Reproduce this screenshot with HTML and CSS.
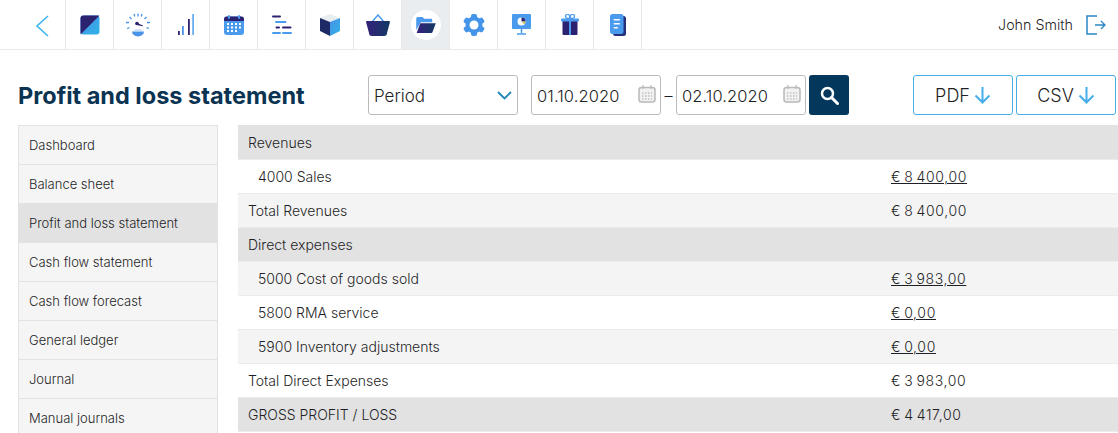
FILE: index.html
```html
<!DOCTYPE html>
<html lang="en">
<head>
  <meta charset="UTF-8">
  <title>Profit and loss statement</title>
  <link rel="stylesheet" href="styles.css">
</head>
<body>
  <svg class="defs" width="0" height="0">
    <defs>
      <linearGradient id="gBlue" x1="0" y1="0" x2="1" y2="1"><stop offset="0" stop-color="#4a8fe8"/><stop offset="1" stop-color="#2fb4e6"/></linearGradient>
      <linearGradient id="gDark" x1="0" y1="0" x2="1" y2="0"><stop offset="0" stop-color="#35207a"/><stop offset="1" stop-color="#123a63"/></linearGradient>
    </defs>
  </svg>

  <header class="topbar">
    <a class="back">
      <svg width="14" height="22" viewBox="0 0 14 22"><path d="M13 1 2 11l11 10" fill="none" stroke="#3db4f0" stroke-width="1.6"/></svg>
    </a>
    <nav class="modules">
      <a class="module">
        <svg width="20" height="20" viewBox="0 0 20 20"><rect width="19" height="19" x=".5" y=".5" rx="3" fill="url(#gBlue)"/><path d="M.5 19.5v-16a3 3 0 0 1 3-3h16z" fill="#2b2370"/></svg>
      </a>
      <a class="module">
        <svg width="26" height="24" viewBox="0 0 26 24"><path d="M1 9.500h3M2 15.500l2.500-.8M22 9.500h3M24 15.500l-2.500-.8M4.500 4l2 2M21.500 4l-2 2M9 1l.8 2.500M17 1l-.8 2.500M13 .5v3" fill="none" stroke="#4a93e8" stroke-width="1.300"/><path d="M11 9.500l7 3-.3.8-7-1.500z" fill="#2b2370"/><circle cx="12" cy="10.500" r="1.800" fill="#2b2370"/><path d="M7 18.500h12a6 5 0 0 1-12 0z" fill="#4a93e8"/><path d="M8.500 18a4.500 2 0 0 1 9 0z" fill="#cfe2fa"/></svg>
      </a>
      <a class="module">
        <svg width="16" height="21" viewBox="0 0 16 21"><rect x="0" y="17" width="1.800" height="4" fill="#2b2370"/><rect x="4" y="12" width="1.800" height="9" fill="#4a93e8"/><rect x="10" y="5" width="1.800" height="16" fill="#2b2370"/><rect x="14.200" y="0" width="1.800" height="21" fill="#6aaef0"/></svg>
      </a>
      <a class="module">
        <svg width="20" height="20" viewBox="0 0 20 20"><rect y="1.500" width="20" height="18.500" rx="3" fill="#4a9bee"/><path d="M0 6V4.500a3 3 0 0 1 3-3h14a3 3 0 0 1 3 3V6z" fill="#2b2370"/><rect x="4" y="0" width="2" height="4" rx="1" fill="#4a9bee"/><rect x="14" y="0" width="2" height="4" rx="1" fill="#4a9bee"/><g fill="#fff"><rect x="3" y="8" width="2" height="2"/><rect x="7" y="8" width="2" height="2"/><rect x="11" y="8" width="2" height="2"/><rect x="15" y="8" width="2" height="2"/><rect x="3" y="11.500" width="2" height="2"/><rect x="7" y="11.500" width="2" height="2"/><rect x="11" y="11.500" width="2" height="2"/><rect x="15" y="11.500" width="2" height="2"/><rect x="7" y="15" width="2" height="2"/><rect x="11" y="15" width="2" height="2"/><rect x="3" y="15" width="2" height="2"/></g></svg>
      </a>
      <a class="module">
        <svg width="20" height="20" viewBox="0 0 20 20"><g fill="none" stroke-width="2" stroke-linecap="round"><path d="M1 1.500h7" stroke="#2b2370"/><path d="M4 7h9.500" stroke="#4a9bee"/><path d="M4.500 12.500h2.500M11 12.500h7.500" stroke="#2b2370"/><path d="M1 18h7M11 18h8" stroke="#4a9bee"/></g></svg>
      </a>
      <a class="module">
        <svg width="20" height="22" viewBox="0 0 20 22"><path d="M10 0 20 4 10 8 0 4z" fill="#e8edf0"/><path d="M0 4l10 4v14L0 17z" fill="#1e2a66"/><path d="M20 4 10 8v14l10-5z" fill="url(#gBlue)"/></svg>
      </a>
      <a class="module">
        <svg width="24" height="22" viewBox="0 0 24 22"><path d="M6 8l6-7 6 7" fill="none" stroke="#4a9bee" stroke-width="1.500"/><path d="M1 7h22a1 1 0 0 1 1 1l-3 11a3 3 0 0 1-3 3H6a3 3 0 0 1-3-3L0 8a1 1 0 0 1 1-1z" fill="url(#gDark)"/></svg>
      </a>
      <a class="module active">
        <span class="circle">
          <svg width="22" height="16" viewBox="0 0 22 18"><path d="M0 2a2 2 0 0 1 2-2h5l2 2h8a1 1 0 0 1 1 1v3H5L0 15z" fill="#4a9bee"/><path d="M4.500 7H22l-3.500 9.500a2 2 0 0 1-2 1.500H.5z" fill="url(#gDark)"/></svg>
        </span>
      </a>
      <a class="module">
        <svg width="22" height="22" viewBox="0 0 22 22"><g fill="#4494ea"><rect x="8" y="0" width="6" height="22" rx="2"/><rect x="8" y="0" width="6" height="22" rx="2" transform="rotate(60 11 11)"/><rect x="8" y="0" width="6" height="22" rx="2" transform="rotate(120 11 11)"/><circle cx="11" cy="11" r="8.500"/></g><circle cx="11" cy="11" r="4.500" fill="#fff"/></svg>
      </a>
      <a class="module">
        <svg width="19" height="21" viewBox="0 0 19 21"><rect width="19" height="15" rx="1" fill="#4a9bee"/><path d="M9.500 15v4" stroke="#4a9bee" stroke-width="1.500"/><path d="M5 20h9" stroke="#4a9bee" stroke-width="1.500"/><circle cx="9.500" cy="7.500" r="4" fill="#fff"/><path d="M9.500 7.500V3.500a4 4 0 0 1 4 4z" fill="#2b2370"/><path d="M9.500 7.500h4a4 4 0 0 1-1.200 2.800z" fill="#c9b94a"/></svg>
      </a>
      <a class="module">
        <svg width="18" height="21" viewBox="0 0 18 21"><path d="M5 3.500a2 2 0 1 1 3.500-1.300L9 4.500 6.500 4.500zM13 3.500a2 2 0 1 0-3.500-1.300L9 4.500h2.500z" fill="none" stroke="#4a9bee" stroke-width="1.300"/><rect x="1.500" y="6" width="15" height="15" rx="1" fill="#2b2370"/><rect x="0" y="4.500" width="18" height="3" rx="1" fill="#4a9bee"/><rect x="8" y="4.500" width="2" height="16.500" fill="#4a9bee"/></svg>
      </a>
      <a class="module">
        <svg width="16" height="22" viewBox="0 0 16 22"><rect x="3" y="2" width="13" height="20" rx="2.500" fill="#24307a"/><rect width="13.500" height="20" rx="2.500" fill="#4a9bee"/><g fill="#fff"><rect x="3.500" y="5" width="6.500" height="1.500" rx=".7"/><rect x="3.500" y="9" width="6.500" height="1.500" rx=".7"/><rect x="3.500" y="13" width="4.500" height="1.500" rx=".7"/></g></svg>
      </a>
    </nav>
    <div class="user">
      <span class="user-name">John Smith</span>
      <svg width="21" height="20" viewBox="0 0 21 20"><path d="M11 1H1v18h10" fill="none" stroke="#2a86c4" stroke-width="1.500"/><path d="M9 10h10M15 6l4 4-4 4" fill="none" stroke="#2a86c4" stroke-width="1.300"/></svg>
    </div>
  </header>

  <section class="toolbar">
    <h1 class="page-title">Profit and loss statement</h1>
    <div class="filters">
      <div class="field select-field">
        <span>Period</span>
        <svg width="15" height="9" viewBox="0 0 15 9"><path d="M1 1l6.500 6.500L14 1" fill="none" stroke="#1f86b8" stroke-width="1.800"/></svg>
      </div>
      <div class="dates">
        <div class="field date-field">
          <span>01.10.2020</span>
          <svg class="cal" width="18" height="18" viewBox="0 0 18 18"><rect x="1" y="2.500" width="16" height="14.500" rx="2.500" fill="#f1f1f1" stroke="#b9b9b9" stroke-width="1.500"/><path d="M5 0v4M13 0v4" stroke="#b9b9b9" stroke-width="1.200"/><path d="M4 8h10M4 11h10M4 14h10" stroke="#aaa" stroke-width="1.200" stroke-dasharray="1.500 1.500"/></svg>
        </div>
        <span class="dash">–</span>
        <div class="field date-field">
          <span>02.10.2020</span>
          <svg class="cal" width="18" height="18" viewBox="0 0 18 18"><rect x="1" y="2.500" width="16" height="14.500" rx="2.500" fill="#f1f1f1" stroke="#b9b9b9" stroke-width="1.500"/><path d="M5 0v4M13 0v4" stroke="#b9b9b9" stroke-width="1.200"/><path d="M4 8h10M4 11h10M4 14h10" stroke="#aaa" stroke-width="1.200" stroke-dasharray="1.500 1.500"/></svg>
        </div>
        <button class="search-btn">
          <svg width="19" height="19" viewBox="0 0 19 19"><circle cx="7.500" cy="7.500" r="5.500" fill="none" stroke="#fff" stroke-width="2.500"/><path d="M11.500 11.500 17.500 17.500" stroke="#fff" stroke-width="3" stroke-linecap="round"/></svg>
        </button>
      </div>
    </div>
    <div class="exports">
      <button class="export-btn">PDF
        <svg width="17" height="18" viewBox="0 0 17 18"><path d="M8.500 1v15M1.500 9.500l7 7 7-7" fill="none" stroke="#45aeea" stroke-width="2"/></svg>
      </button>
      <button class="export-btn">CSV
        <svg width="17" height="18" viewBox="0 0 17 18"><path d="M8.500 1v15M1.500 9.500l7 7 7-7" fill="none" stroke="#45aeea" stroke-width="2"/></svg>
      </button>
    </div>
  </section>

  <main class="content">
    <ul class="side-menu">
      <li>Dashboard</li>
      <li>Balance sheet</li>
      <li class="current">Profit and loss statement</li>
      <li>Cash flow statement</li>
      <li>Cash flow forecast</li>
      <li>General ledger</li>
      <li>Journal</li>
      <li>Manual journals</li>
    </ul>
    <table class="report">
      <tr class="head first"><td>Revenues</td><td></td></tr>
      <tr class="sub"><td>4000 Sales</td><td><a>€ 8 400,00</a></td></tr>
      <tr class="alt"><td>Total Revenues</td><td>€ 8 400,00</td></tr>
      <tr class="head"><td>Direct expenses</td><td></td></tr>
      <tr class="sub alt"><td>5000 Cost of goods sold</td><td><a>€ 3 983,00</a></td></tr>
      <tr class="sub"><td>5800 RMA service</td><td><a>€ 0,00</a></td></tr>
      <tr class="sub alt"><td>5900 Inventory adjustments</td><td><a>€ 0,00</a></td></tr>
      <tr><td>Total Direct Expenses</td><td>€ 3 983,00</td></tr>
      <tr class="head"><td>GROSS PROFIT / LOSS</td><td>€ 4 417,00</td></tr>
    </table>
  </main>
</body>
</html>
```

FILE: styles.css
```css
:root {
  --text: #1f1f27;
  --navy: #03375b;
  --line: #e8e9ea;
  --sky: #45aeea;
}

html, body {
  height: 433px;
  overflow: hidden;
}

body {
  margin: 0;
  background: #fff;
  color: var(--text);
  font-family: Inter, "Liberation Sans", sans-serif;
  font-size: 14px;
  font-weight: 300;
}

.defs {
  display: block;
  height: 0;
}

.topbar {
  display: flex;
  height: 49px;
  border-bottom: 1px solid var(--line);
}

.back {
  width: 65px;
  display: flex;
  align-items: center;
  padding-left: 35px;
  padding-top: 2px;
  box-sizing: border-box;
}

.modules {
  display: flex;
}

.module {
  width: 48px;
  display: flex;
  align-items: center;
  justify-content: center;
  border-left: 1px solid var(--line);
  box-sizing: border-box;
}

.module:last-child {
  width: 49px;
  border-right: 1px solid var(--line);
}

.module.active {
  background: #e9edf0;
}

.circle {
  width: 30px;
  height: 30px;
  border-radius: 50%;
  background: #fff;
  display: flex;
  align-items: center;
  justify-content: center;
}

.user {
  margin-left: auto;
  display: flex;
  align-items: center;
  gap: 13px;
  padding-right: 11px;
  font-size: 14.300px;
}

.toolbar {
  display: flex;
  align-items: center;
  height: 40px;
  margin-top: 25px;
  padding-left: 18px;
}

.page-title {
  width: 350px;
  margin: 0;
  font-size: 23.500px;
  font-weight: 700;
  color: #0b3352;
}

.filters {
  display: flex;
  gap: 13px;
}

.dates {
  display: flex;
  align-items: center;
}

.field {
  height: 40px;
  box-sizing: border-box;
  border: 1px solid #bbb;
  border-radius: 3px;
  display: flex;
  align-items: center;
  justify-content: space-between;
  font-size: 17px;
}

.field span {
  padding-top: 1px;
}

.select-field {
  width: 150px;
  padding: 0 5px 0 5px;
}

.date-field {
  width: 130px;
  padding: 0 4px 0 5px;
  font-size: 16.500px;
  letter-spacing: 0.1px;
}

.cal {
  margin-top: -2px;
}

.dash {
  width: 15px;
  text-align: center;
  font-size: 16px;
}

.search-btn {
  width: 40px;
  height: 40px;
  margin-left: 3px;
  border: 0;
  border-radius: 3px;
  background: var(--navy);
  display: flex;
  align-items: center;
  justify-content: center;
  padding: 0;
}

.exports {
  display: flex;
  gap: 3px;
  margin-left: 64px;
}

.export-btn {
  width: 100px;
  height: 40px;
  box-sizing: border-box;
  background: #fff;
  border: 1px solid var(--sky);
  border-radius: 3px;
  display: flex;
  align-items: center;
  justify-content: center;
  gap: 4px;
  color: var(--text);
  font-family: inherit;
  font-weight: 300;
  font-size: 18px;
  padding: 0;
}

.content {
  display: flex;
  align-items: flex-start;
  gap: 20px;
  margin-top: 10px;
  padding-left: 18px;
}

.side-menu {
  width: 200px;
  flex: none;
  box-sizing: border-box;
  margin: 0;
  padding: 0;
  list-style: none;
  border: 1px solid #e2e2e2;
  border-bottom: 0;
  background: #f5f5f5;
  font-size: 13px;
}

.side-menu li {
  height: 39px;
  box-sizing: border-box;
  padding-left: 10px;
  display: flex;
  align-items: center;
  border-bottom: 1px solid #e2e2e2;
}

.side-menu li.current {
  background: #e2e2e2;
}

.report {
  flex: 1;
  border-collapse: separate;
  border-spacing: 0;
  font-size: 14px;
}

.report td {
  height: 34px;
  padding: 0 0 0 10px;
  box-sizing: border-box;
  border-bottom: 1px solid #ececec;
}

.report td:last-child {
  width: 227px;
  padding: 0;
  letter-spacing: 0.65px;
  word-spacing: -1.500px;
}

.report .sub td:first-child {
  padding-left: 20px;
}

.report a {
  text-decoration: underline;
}

.report .alt td {
  background: #f4f4f4;
}

.report .head td {
  background: #e2e2e2;
}

.report .first td {
  height: 35px;
  padding-top: 1px;
}
```
